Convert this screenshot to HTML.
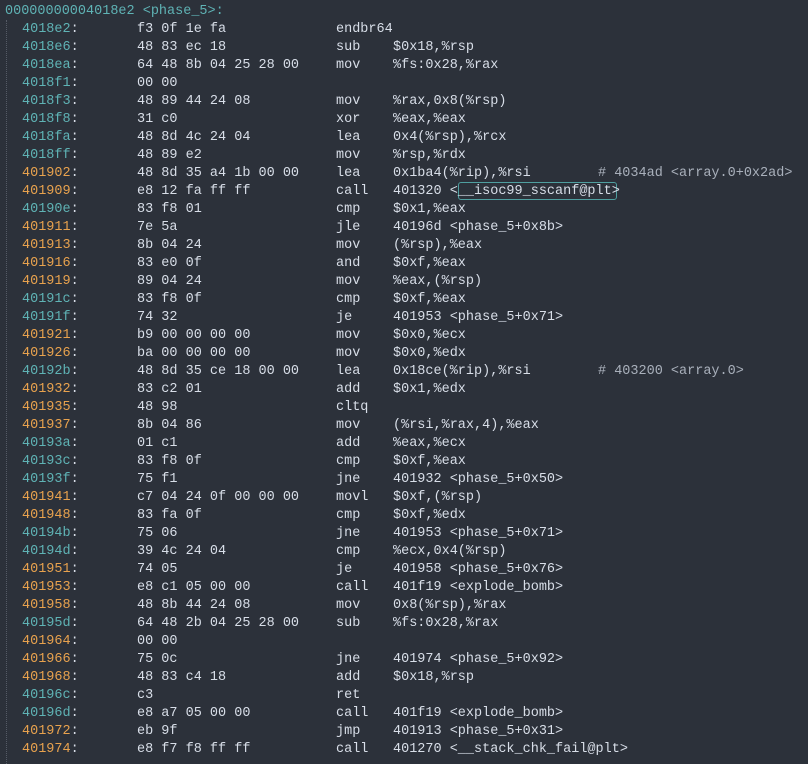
<!DOCTYPE html>
<html><head><meta charset="utf-8"><style>
html,body{margin:0;padding:0;background:#2c313a;width:808px;height:764px;overflow:hidden}
body{font-family:"Liberation Mono",monospace;font-size:13.5px;color:#d8dee8;position:relative}
#w{position:absolute;left:0;top:2px;width:808px;height:762px}
.r{position:absolute;left:0;width:808px;height:18px;line-height:18px;white-space:pre}
.r>i{position:absolute;top:0;font-style:normal}
.a{left:22px;color:#5fb3b5}.a.n{color:#e8a24e}
.a b{font-weight:normal;color:#d8dee8}
.b{left:137px}.m{left:336px}.o{left:393px}.c{left:598px;color:#a9b0bb}
.guide{position:absolute;left:6px;top:18px;height:744px;border-left:1px dotted #555b66}
.box{position:absolute;left:458px;top:180px;width:159px;height:18px;border:1px solid #4f9fa0;border-radius:3px;box-sizing:border-box}
</style></head><body><div id="w">
<div class="guide"></div>
<div class="box"></div>
<div class="r" style="top:1px"><i style="left:5px;color:#5fb3b5">00000000004018e2 &lt;phase_5&gt;:</i></div>
<div class="r" style="top:19px"><i class="a">4018e2<b>:</b></i><i class="b">f3 0f 1e fa</i><i class="m">endbr64</i></div>
<div class="r" style="top:37px"><i class="a">4018e6<b>:</b></i><i class="b">48 83 ec 18</i><i class="m">sub</i><i class="o">$0x18,%rsp</i></div>
<div class="r" style="top:55px"><i class="a">4018ea<b>:</b></i><i class="b">64 48 8b 04 25 28 00</i><i class="m">mov</i><i class="o">%fs:0x28,%rax</i></div>
<div class="r" style="top:73px"><i class="a">4018f1<b>:</b></i><i class="b">00 00</i></div>
<div class="r" style="top:91px"><i class="a">4018f3<b>:</b></i><i class="b">48 89 44 24 08</i><i class="m">mov</i><i class="o">%rax,0x8(%rsp)</i></div>
<div class="r" style="top:109px"><i class="a">4018f8<b>:</b></i><i class="b">31 c0</i><i class="m">xor</i><i class="o">%eax,%eax</i></div>
<div class="r" style="top:127px"><i class="a">4018fa<b>:</b></i><i class="b">48 8d 4c 24 04</i><i class="m">lea</i><i class="o">0x4(%rsp),%rcx</i></div>
<div class="r" style="top:145px"><i class="a">4018ff<b>:</b></i><i class="b">48 89 e2</i><i class="m">mov</i><i class="o">%rsp,%rdx</i></div>
<div class="r" style="top:163px"><i class="a n">401902<b>:</b></i><i class="b">48 8d 35 a4 1b 00 00</i><i class="m">lea</i><i class="o">0x1ba4(%rip),%rsi</i><i class="c"># 4034ad &lt;array.0+0x2ad&gt;</i></div>
<div class="r" style="top:181px"><i class="a n">401909<b>:</b></i><i class="b">e8 12 fa ff ff</i><i class="m">call</i><i class="o">401320 &lt;__isoc99_sscanf@plt&gt;</i></div>
<div class="r" style="top:199px"><i class="a">40190e<b>:</b></i><i class="b">83 f8 01</i><i class="m">cmp</i><i class="o">$0x1,%eax</i></div>
<div class="r" style="top:217px"><i class="a n">401911<b>:</b></i><i class="b">7e 5a</i><i class="m">jle</i><i class="o">40196d &lt;phase_5+0x8b&gt;</i></div>
<div class="r" style="top:235px"><i class="a n">401913<b>:</b></i><i class="b">8b 04 24</i><i class="m">mov</i><i class="o">(%rsp),%eax</i></div>
<div class="r" style="top:253px"><i class="a n">401916<b>:</b></i><i class="b">83 e0 0f</i><i class="m">and</i><i class="o">$0xf,%eax</i></div>
<div class="r" style="top:271px"><i class="a n">401919<b>:</b></i><i class="b">89 04 24</i><i class="m">mov</i><i class="o">%eax,(%rsp)</i></div>
<div class="r" style="top:289px"><i class="a">40191c<b>:</b></i><i class="b">83 f8 0f</i><i class="m">cmp</i><i class="o">$0xf,%eax</i></div>
<div class="r" style="top:307px"><i class="a">40191f<b>:</b></i><i class="b">74 32</i><i class="m">je</i><i class="o">401953 &lt;phase_5+0x71&gt;</i></div>
<div class="r" style="top:325px"><i class="a n">401921<b>:</b></i><i class="b">b9 00 00 00 00</i><i class="m">mov</i><i class="o">$0x0,%ecx</i></div>
<div class="r" style="top:343px"><i class="a n">401926<b>:</b></i><i class="b">ba 00 00 00 00</i><i class="m">mov</i><i class="o">$0x0,%edx</i></div>
<div class="r" style="top:361px"><i class="a">40192b<b>:</b></i><i class="b">48 8d 35 ce 18 00 00</i><i class="m">lea</i><i class="o">0x18ce(%rip),%rsi</i><i class="c"># 403200 &lt;array.0&gt;</i></div>
<div class="r" style="top:379px"><i class="a n">401932<b>:</b></i><i class="b">83 c2 01</i><i class="m">add</i><i class="o">$0x1,%edx</i></div>
<div class="r" style="top:397px"><i class="a n">401935<b>:</b></i><i class="b">48 98</i><i class="m">cltq</i></div>
<div class="r" style="top:415px"><i class="a n">401937<b>:</b></i><i class="b">8b 04 86</i><i class="m">mov</i><i class="o">(%rsi,%rax,4),%eax</i></div>
<div class="r" style="top:433px"><i class="a">40193a<b>:</b></i><i class="b">01 c1</i><i class="m">add</i><i class="o">%eax,%ecx</i></div>
<div class="r" style="top:451px"><i class="a">40193c<b>:</b></i><i class="b">83 f8 0f</i><i class="m">cmp</i><i class="o">$0xf,%eax</i></div>
<div class="r" style="top:469px"><i class="a">40193f<b>:</b></i><i class="b">75 f1</i><i class="m">jne</i><i class="o">401932 &lt;phase_5+0x50&gt;</i></div>
<div class="r" style="top:487px"><i class="a n">401941<b>:</b></i><i class="b">c7 04 24 0f 00 00 00</i><i class="m">movl</i><i class="o">$0xf,(%rsp)</i></div>
<div class="r" style="top:505px"><i class="a n">401948<b>:</b></i><i class="b">83 fa 0f</i><i class="m">cmp</i><i class="o">$0xf,%edx</i></div>
<div class="r" style="top:523px"><i class="a">40194b<b>:</b></i><i class="b">75 06</i><i class="m">jne</i><i class="o">401953 &lt;phase_5+0x71&gt;</i></div>
<div class="r" style="top:541px"><i class="a">40194d<b>:</b></i><i class="b">39 4c 24 04</i><i class="m">cmp</i><i class="o">%ecx,0x4(%rsp)</i></div>
<div class="r" style="top:559px"><i class="a n">401951<b>:</b></i><i class="b">74 05</i><i class="m">je</i><i class="o">401958 &lt;phase_5+0x76&gt;</i></div>
<div class="r" style="top:577px"><i class="a n">401953<b>:</b></i><i class="b">e8 c1 05 00 00</i><i class="m">call</i><i class="o">401f19 &lt;explode_bomb&gt;</i></div>
<div class="r" style="top:595px"><i class="a n">401958<b>:</b></i><i class="b">48 8b 44 24 08</i><i class="m">mov</i><i class="o">0x8(%rsp),%rax</i></div>
<div class="r" style="top:613px"><i class="a">40195d<b>:</b></i><i class="b">64 48 2b 04 25 28 00</i><i class="m">sub</i><i class="o">%fs:0x28,%rax</i></div>
<div class="r" style="top:631px"><i class="a n">401964<b>:</b></i><i class="b">00 00</i></div>
<div class="r" style="top:649px"><i class="a n">401966<b>:</b></i><i class="b">75 0c</i><i class="m">jne</i><i class="o">401974 &lt;phase_5+0x92&gt;</i></div>
<div class="r" style="top:667px"><i class="a n">401968<b>:</b></i><i class="b">48 83 c4 18</i><i class="m">add</i><i class="o">$0x18,%rsp</i></div>
<div class="r" style="top:685px"><i class="a">40196c<b>:</b></i><i class="b">c3</i><i class="m">ret</i></div>
<div class="r" style="top:703px"><i class="a">40196d<b>:</b></i><i class="b">e8 a7 05 00 00</i><i class="m">call</i><i class="o">401f19 &lt;explode_bomb&gt;</i></div>
<div class="r" style="top:721px"><i class="a n">401972<b>:</b></i><i class="b">eb 9f</i><i class="m">jmp</i><i class="o">401913 &lt;phase_5+0x31&gt;</i></div>
<div class="r" style="top:739px"><i class="a n">401974<b>:</b></i><i class="b">e8 f7 f8 ff ff</i><i class="m">call</i><i class="o">401270 &lt;__stack_chk_fail@plt&gt;</i></div>
</div></body></html>
